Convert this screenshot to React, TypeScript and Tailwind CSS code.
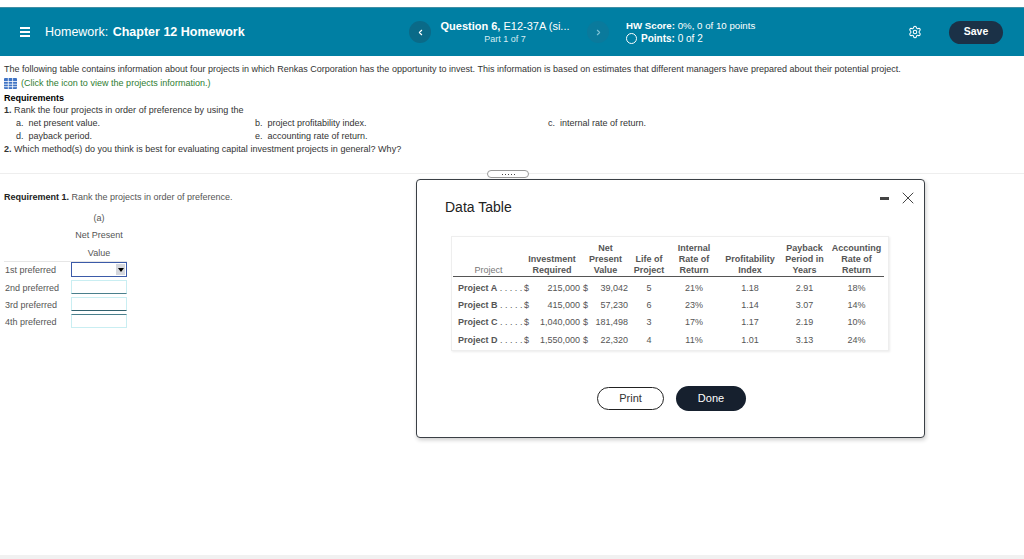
import React from 'react'
import { ChevronLeft, ChevronRight, Settings, X } from 'lucide-react'

const projects = [
  { name: 'Project A', inv: '215,000', npv: '39,042', life: '5', irr: '21%', pi: '1.18', pay: '2.91', arr: '18%' },
  { name: 'Project B', inv: '415,000', npv: '57,230', life: '6', irr: '23%', pi: '1.14', pay: '3.07', arr: '14%' },
  { name: 'Project C', inv: '1,040,000', npv: '181,498', life: '3', irr: '17%', pi: '1.17', pay: '2.19', arr: '10%' },
  { name: 'Project D', inv: '1,550,000', npv: '22,320', life: '4', irr: '11%', pi: '1.01', pay: '3.13', arr: '24%' },
]

function Header() {
  return (
    <div className="h-[49px] mt-[7px] bg-[#007fa3] border-t border-[#3f8fa5] flex items-center text-white">
      <div className="w-[18px] ml-[20px] flex flex-col gap-[2.5px]">
        <div className="w-[10px] h-[1.5px] bg-white" />
        <div className="w-[10px] h-[1.5px] bg-white" />
        <div className="w-[10px] h-[1.5px] bg-white" />
      </div>
      <div className="ml-[7px] w-[364px] text-[12.5px]">
        Homework: <span className="font-bold ml-[1px]">Chapter 12 Homework</span>
      </div>
      <button className="w-[22px] h-[22px] rounded-full bg-[#0a6a88] flex items-center justify-center">
        <ChevronLeft size={9} strokeWidth={3} />
      </button>
      <div className="ml-[8px] w-[132px] text-center">
        <div className="text-[11px] leading-[14px] whitespace-nowrap">
          <span className="font-bold">Question 6,</span> E12-37A (si...
        </div>
        <div className="text-[9px] leading-[12px] text-[#d7edf3]">Part 1 of 7</div>
      </div>
      <div className="ml-[16px] w-[22px] h-[22px] rounded-full bg-[#0a7a9c] flex items-center justify-center text-[#7fc2d6]">
        <ChevronRight size={9} strokeWidth={3} />
      </div>
      <div className="ml-[17px] w-[282px]">
        <div className="text-[9.7px] leading-[13px]">
          <span className="font-bold">HW Score:</span> 0%, 0 of 10 points
        </div>
        <div className="flex items-center gap-[4px] text-[10px] leading-[14px]">
          <div className="w-[11px] h-[11px] rounded-full border-[1.5px] border-white" />
          <span><span className="font-bold">Points:</span> 0 of 2</span>
        </div>
      </div>
      <Settings size={14} strokeWidth={1.8} />
      <button className="ml-[27px] w-[54px] h-[23px] rounded-full bg-[#1b3147] text-[10.5px] font-bold">Save</button>
    </div>
  )
}

function Question() {
  return (
    <div className="px-[4px] pt-[7px] text-[9px] leading-[13px] text-[#333] h-[118px] border-b border-[#eeeeee]">
      <div className="tracking-[0.007px] whitespace-nowrap">
        The following table contains information about four projects in which Renkas Corporation has the opportunity to invest. This information is based on estimates that different managers have prepared about their potential project.
      </div>
      <div className="flex items-center gap-[4px] mt-[1px] text-[#2f7d32] tracking-[0.02px]">
        <svg width="13" height="11" viewBox="0 0 13 11">
          <rect width="13" height="11" rx="1" fill="#3f73c4" />
          <path d="M0 3.5h13M0 6.2h13M0 8.7h13M4.3 0v11M8.6 0v11" stroke="#fff" strokeWidth="0.8" />
        </svg>
        <span>(Click the icon to view the projects information.)</span>
      </div>
      <div className="font-bold text-black mt-[2px]">Requirements</div>
      <div className="-mt-[1px] tracking-[0.03px]"><span className="font-bold">1.</span> Rank the four projects in order of preference by using the</div>
      <div className="grid grid-cols-[239px_293px_1fr] pl-[12px]">
        <div>a.&nbsp; net present value.</div>
        <div>b.&nbsp; project profitability index.</div>
        <div>c.&nbsp; internal rate of return.</div>
        <div>d.&nbsp; payback period.</div>
        <div>e.&nbsp; accounting rate of return.</div>
      </div>
      <div className="tracking-[0.02px]"><span className="font-bold">2.</span> Which method(s) do you think is best for evaluating capital investment projects in general? Why?</div>
    </div>
  )
}

function Answer() {
  return (
    <div className="px-[4px] pt-[17px] text-[9px] text-[#555]">
      <div className="leading-[13px]"><span className="font-bold text-[#222]">Requirement 1.</span> Rank the projects in order of preference.</div>
      <div className="mt-[6px] w-[127px] grid grid-cols-[67px_56px] gap-x-0 leading-[17.4px]">
        <div />
        <div className="text-center">(a)</div>
        <div />
        <div className="text-center">Net Present</div>
        <div />
        <div className="text-center">Value</div>
        <div className="col-span-2 border-t border-[#e6e6e6] -mt-[1px]" />
        <div className="pl-[1px]">1st preferred</div>
        <div className="h-[15px] border-[1.5px] border-[#3b5aa8] flex justify-end items-center pr-[1px]">
          <div className="w-[9px] h-[11px] bg-[#d5d7dd] flex items-center justify-center">
            <div className="w-0 h-0 border-x-[3px] border-x-transparent border-t-[4px] border-t-black" />
          </div>
        </div>
        <div className="pl-[1px]">2nd preferred</div>
        <div className="h-[14px] border border-[#c9eef2] border-b-[#4a7f8c]" />
        <div className="pl-[1px]">3rd preferred</div>
        <div className="h-[14px] border border-[#c9eef2] border-b-[#33626e]" />
        <div className="pl-[1px]">4th preferred</div>
        <div className="h-[14px] border border-[#c9eef2] border-t-[#4a7f8c]" />
      </div>
    </div>
  )
}

function DataTable() {
  const th = 'font-bold text-center align-bottom px-0'
  const td = 'text-center'
  return (
    <div className="ml-[34px] mt-[-1px] w-[438px] h-[115px] border border-[#eeeeee] shadow-[1px_1px_2px_rgba(0,0,0,0.08)] pl-[1px] pt-[6px]">
      <table className="table-fixed w-[431px] text-[9px] leading-[11px] text-[#555] border-collapse">
        <colgroup>
          <col className="w-[71px]" />
          <col className="w-[9px]" />
          <col className="w-[50px]" />
          <col className="w-[9px]" />
          <col className="w-[38px]" />
          <col className="w-[38px]" />
          <col className="w-[52px]" />
          <col className="w-[60px]" />
          <col className="w-[49px]" />
          <col className="w-[55px]" />
        </colgroup>
        <thead>
          <tr className="border-b border-[#555]">
            <th className="font-normal text-center align-bottom text-[#777]">Project</th>
            <th colSpan={2} className={`${th} pr-[3px]`}>Investment<br />Required</th>
            <th colSpan={2} className={`${th} pr-[2px]`}>Net<br />Present<br />Value</th>
            <th className={th}>Life of<br />Project</th>
            <th className={th}>Internal<br />Rate of<br />Return</th>
            <th className={th}>Profitability<br />Index</th>
            <th className={th}>Payback<br />Period in<br />Years</th>
            <th className={th}>Accounting<br />Rate of<br />Return</th>
          </tr>
        </thead>
        <tbody>
          <tr className="h-[3px]"><td colSpan={10} /></tr>
          {projects.map((p) => (
            <tr key={p.name} className="h-[17.4px]">
              <td className="pl-[5px] whitespace-nowrap"><span className="font-bold">{p.name}</span> . . . . .</td>
              <td className="text-left">$</td>
              <td className="text-right pr-[3px]">{p.inv}</td>
              <td className="text-left">$</td>
              <td className="text-right pr-[2px]">{p.npv}</td>
              <td className={td}>{p.life}</td>
              <td className={td}>{p.irr}</td>
              <td className={td}>{p.pi}</td>
              <td className={td}>{p.pay}</td>
              <td className={td}>{p.arr}</td>
            </tr>
          ))}
        </tbody>
      </table>
    </div>
  )
}

function Modal() {
  return (
    <div className="absolute left-[416px] top-[179px] w-[509px] h-[259px] bg-white rounded-[4px] border-[1.5px] border-[#3a3f45] shadow-[1px_2px_4px_rgba(0,0,0,0.2)]">
      <div className="flex items-center h-[57px] pl-[28px] pr-[6px]">
        <div className="text-[14px] text-[#222] flex-1 mt-[-3px]">Data Table</div>
        <div className="w-[9px] h-[3px] bg-[#444] mr-[9px] mt-[-20px]" />
        <X size={20} strokeWidth={1.1} className="text-[#333] mt-[-22px]" />
      </div>
      <DataTable />
      <div className="flex justify-center gap-[12px] mt-[36px] ml-[2px] text-[11px]">
        <button className="w-[67px] h-[23px] rounded-full border-[1.5px] border-[#222] text-[#333]">Print</button>
        <button className="w-[70px] h-[25px] -mt-[1px] rounded-full bg-[#16202e] text-white">Done</button>
      </div>
    </div>
  )
}

export default function App() {
  return (
    <div className="relative w-[1024px] h-[559px] overflow-hidden bg-white font-['Liberation_Sans',Arial,sans-serif]">
      <Header />
      <Question />
      <div className="absolute left-[487px] top-[170px] w-[42px] h-[8px] rounded-full border border-[#999] bg-white flex items-center justify-center gap-[2px]">
        <div className="w-[1px] h-[1px] bg-[#444]" />
        <div className="w-[1px] h-[1px] bg-[#444]" />
        <div className="w-[1px] h-[1px] bg-[#444]" />
        <div className="w-[1px] h-[1px] bg-[#444]" />
        <div className="w-[1px] h-[1px] bg-[#444]" />
      </div>
      <Answer />
      <Modal />
      <div className="absolute left-0 bottom-0 w-full h-[4px] bg-[#f1f1f1]" />
    </div>
  )
}
